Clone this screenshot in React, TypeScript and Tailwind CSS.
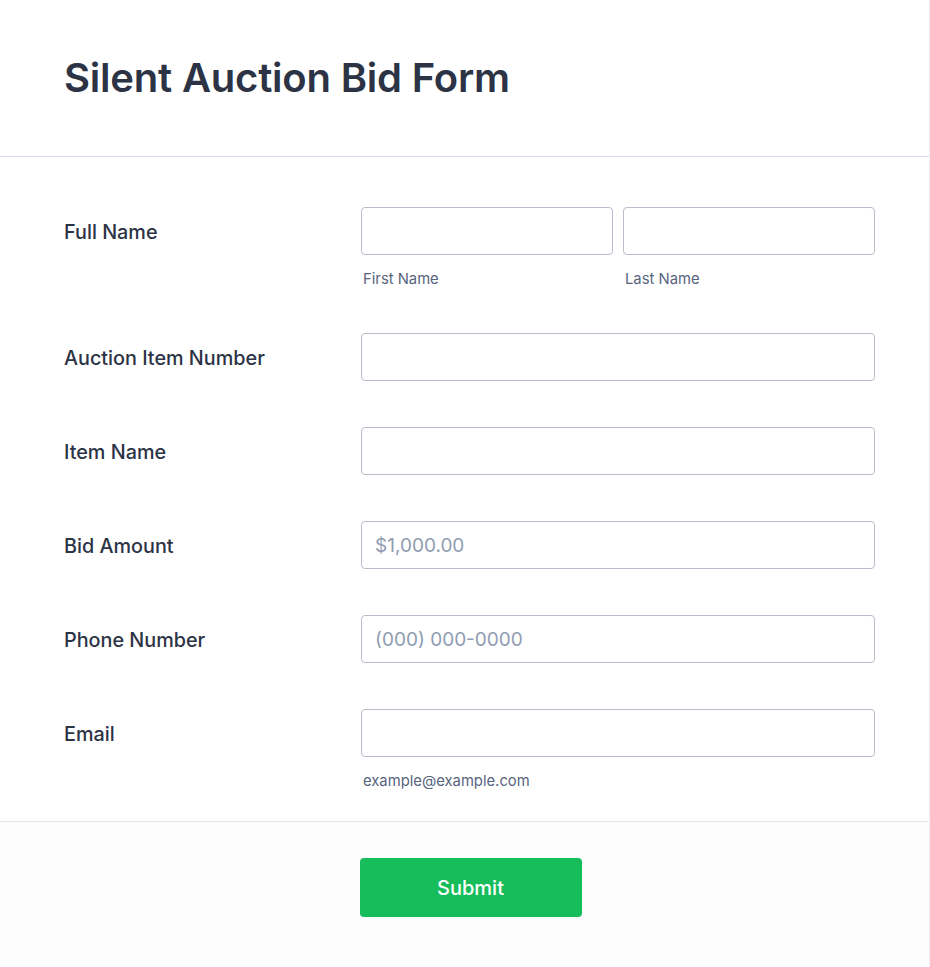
const fields = [
  { label: "Auction Item Number", placeholder: "" },
  { label: "Item Name", placeholder: "" },
  { label: "Bid Amount", placeholder: "$1,000.00" },
  { label: "Phone Number", placeholder: "(000) 000-0000" },
]

const inputCls =
  "h-12 w-full rounded-[4px] border border-[#b8bdc9] bg-white px-[13px] text-[19px] text-[#2c3345] placeholder:text-[#8f9cb2] outline-none"

const labelCls = "w-[297px] shrink-0 pt-[13px] text-[19.8px] font-medium leading-6"

const subCls = "mt-[15px] pl-[2px] text-[14.8px] leading-[18px] text-[#57647e]"

const App = () => {
  return (
    <div className="min-h-screen bg-[#f3f3f7] font-['Inter',sans-serif] text-[#2c3345]">
      <div className="w-[929px] bg-white">
        {/* Header */}
        <div className="border-b border-[#d8dae9] px-16 pt-[52px] pb-[52px]">
          <h1 className="text-[40px] font-semibold leading-[52px] tracking-[-0.2px]">Silent Auction Bid Form</h1>
        </div>

        {/* Form */}
        <div className="border-b border-[#e6e8f0] pl-16 pr-[54px] pt-[50px] pb-[31px]">
          {/* Full name */}
          <div className="flex">
            <label className={labelCls}>Full Name</label>
            <div className="flex flex-1 gap-[10px]">
              <div className="flex-1">
                <input className={inputCls} />
                <div className={subCls}>First Name</div>
              </div>
              <div className="flex-1">
                <input className={inputCls} />
                <div className={subCls}>Last Name</div>
              </div>
            </div>
          </div>

          {fields.map((f, i) => (
            <div key={f.label} className={`flex ${i === 0 ? "mt-[45px]" : "mt-[46px]"}`}>
              <label className={labelCls}>{f.label}</label>
              <div className="flex-1">
                <input className={inputCls} placeholder={f.placeholder} />
              </div>
            </div>
          ))}

          {/* Email */}
          <div className="mt-[46px] flex">
            <label className={labelCls}>Email</label>
            <div className="flex-1">
              <input className={inputCls} />
              <div className={subCls}>example@example.com</div>
            </div>
          </div>
        </div>

        {/* Footer */}
        <div className="flex justify-center bg-[#fdfdfd] pt-[36px] pb-[50px]">
          <button className="ml-[12px] h-[59px] w-[222px] rounded-[4px] bg-[#18bd5b] text-[20px] font-medium text-white">
            Submit
          </button>
        </div>
      </div>
    </div>
  )
}

export default App
